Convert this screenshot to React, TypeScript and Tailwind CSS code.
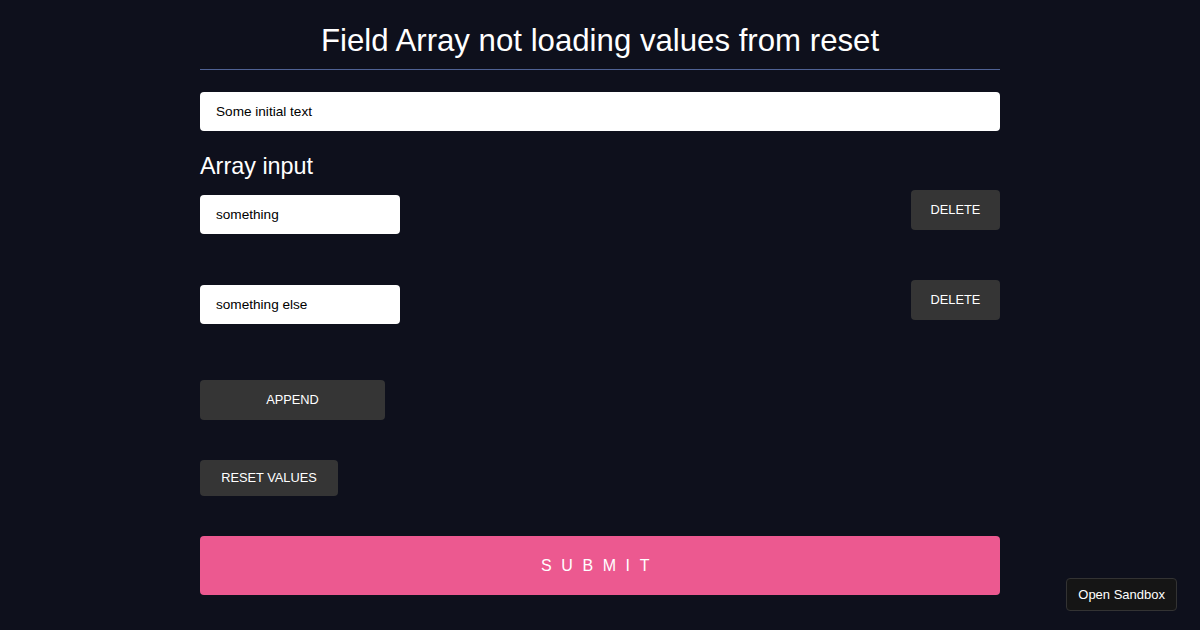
import React from "react";

const btn =
  "bg-[#353535] text-white text-[12.8px] rounded-[4px] flex items-center justify-center";

export default function App() {
  return (
    <div
      className="min-h-[630px] bg-[#0e101c] text-white"
      style={{ fontFamily: '"Liberation Sans", Arial, sans-serif' }}
    >
      <div className="w-[800px] mx-auto pt-[23px]">
        <h1 className="text-[31.2px] leading-[36px] font-normal text-center pb-[10px] border-b border-[#4f6294]">
          Field Array not loading values from reset
        </h1>
        <input
          className="mt-[22px] block w-full h-[39px] bg-white text-black rounded-[4px] px-[16px] text-[13.6px] outline-none"
          defaultValue="Some initial text"
        />
        <h2 className="mt-[21px] text-[23.4px] leading-[28px] font-normal">Array input</h2>
        <div className="mt-[10px] flex flex-col">
          {["something", "something else"].map((v) => (
            <div key={v} className="h-[90px] flex items-start justify-between">
              <input
                className="mt-[5px] block w-[200px] h-[39px] bg-white text-black rounded-[4px] px-[16px] text-[13.6px] outline-none"
                defaultValue={v}
              />
              <button className={`${btn} w-[89px] h-[40px]`}>DELETE</button>
            </div>
          ))}
        </div>
        <button className={`${btn} mt-[10px] w-[185px] h-[40px]`}>APPEND</button>
        <button className={`${btn} mt-[40px] w-[138px] h-[36px]`}>RESET VALUES</button>
        <button className="mt-[40px] w-full h-[59px] bg-[#ec5990] text-white rounded-[4px] text-[16px] tracking-[9.6px] flex items-center justify-center">
          SUBMIT
        </button>
      </div>
      <button className="fixed right-[23px] bottom-[19px] h-[33px] px-[11px] bg-[#151515] border border-[#333] rounded-[4px] text-[13px] text-white">
        Open Sandbox
      </button>
    </div>
  );
}
